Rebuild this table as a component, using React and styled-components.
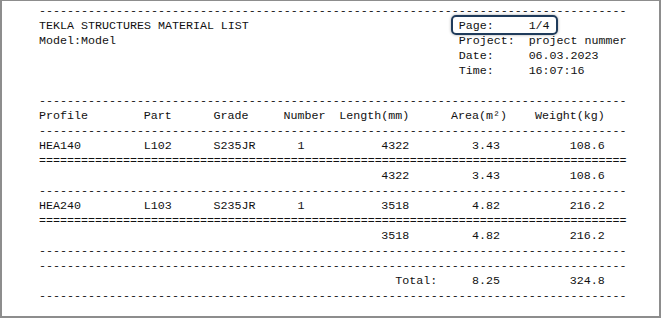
import React from "react";
import styled, { createGlobalStyle, css } from "styled-components";

const GlobalStyle = createGlobalStyle`
  html, body { margin: 0; padding: 0; background: #fff; }
`;

const WIDTH = 84;

const Frame = styled.div`
  box-sizing: border-box;
  width: 661px;
  height: 318px;
  border: 2px solid #8d8d8d;
  border-top-width: 1px;
  padding: 3px 0 0 37px;
  background: #fff;
  font-family: "Courier New", "Nimbus Mono PS", "FreeMono", "Liberation Mono", monospace;
  font-size: 11.67px;
  line-height: 15px;
  color: #111;
`;

const Sheet = styled.div`
  width: ${WIDTH}ch;
`;

const Rule = styled.div`
  height: 15px;
  white-space: pre;
  overflow: hidden;
`;

const Header = styled.div`
  display: flex;
  margin-bottom: 15px;
`;

const TitleBlock = styled.div`
  width: 60ch;
  white-space: pre;
`;

const MetaBlock = styled.div`
  display: flex;
  flex-direction: column;
  align-items: flex-start;
`;

const MetaRow = styled.div`
  display: flex;
  position: relative;
  white-space: pre;
  ${(p) =>
    p.$highlight &&
    css`
      &::before {
        content: "";
        position: absolute;
        inset: -4px -8px -1px -8px;
        border: 2px solid #1f3b5b;
        border-radius: 5px;
        box-shadow: 0 0 3px rgba(0, 0, 0, 0.35);
        pointer-events: none;
      }
    `}
`;

const MetaLabel = styled.span`
  width: 10ch;
`;

const GridLine = styled.div`
  display: grid;
  grid-template-columns: repeat(${WIDTH}, 1ch);
  height: 15px;
  white-space: pre;
`;

const Cell = styled.span`
  grid-column: ${(p) => p.$at + 1} / span ${(p) => p.$span};
  text-align: ${(p) => p.$align || "left"};
`;

const dashes = "-".repeat(WIDTH);
const equals = "=".repeat(WIDTH);

const headerCells = [
  ["Profile", 0, 15],
  ["Part", 15, 10],
  ["Grade", 25, 10],
  ["Number", 35, 8],
  ["Length(mm)", 43, 10],
  ["Area(m²)", 59, 8],
  ["Weight(kg)", 71, 10],
];

const itemCells = (it) => [
  [it.profile, 0, 15],
  [it.part, 15, 10],
  [it.grade, 25, 10],
  [it.number, 37, 6],
  [it.length, 43, 10, "right"],
  [it.area, 59, 7, "right"],
  [it.weight, 71, 10, "right"],
];

const sumCells = (it) => [
  [it.length, 43, 10, "right"],
  [it.area, 59, 7, "right"],
  [it.weight, 71, 10, "right"],
];

const items = [
  { profile: "HEA140", part: "L102", grade: "S235JR", number: "1", length: "4322", area: "3.43", weight: "108.6" },
  { profile: "HEA240", part: "L103", grade: "S235JR", number: "1", length: "3518", area: "4.82", weight: "216.2" },
];

const totalCells = [
  ["Total:", 51, 6],
  ["8.25", 59, 7, "right"],
  ["324.8", 71, 10, "right"],
];

const Line = ({ cells }) => (
  <GridLine>
    {cells.map(([text, at, span, align], i) => (
      <Cell key={i} $at={at} $span={span} $align={align}>
        {text}
      </Cell>
    ))}
  </GridLine>
);

const meta = [
  ["Page:", "1/4", true],
  ["Project:", "project nummer"],
  ["Date:", "06.03.2023"],
  ["Time:", "16:07:16"],
];

export default function App() {
  return (
    <>
      <GlobalStyle />
      <Frame>
        <Sheet>
          <Rule>{dashes}</Rule>
          <Header>
            <TitleBlock>
              <div>TEKLA STRUCTURES MATERIAL LIST</div>
              <div>Model:Model</div>
            </TitleBlock>
            <MetaBlock>
              {meta.map(([label, value, hl]) => (
                <MetaRow key={label} $highlight={hl}>
                  <MetaLabel>{label}</MetaLabel>
                  <span>{value}</span>
                </MetaRow>
              ))}
            </MetaBlock>
          </Header>
          <Rule>{dashes}</Rule>
          <Line cells={headerCells} />
          <Rule>{dashes}</Rule>
          {items.map((it, i) => (
            <React.Fragment key={it.part}>
              {i > 0 && <Rule>{dashes}</Rule>}
              <Line cells={itemCells(it)} />
              <Rule>{equals}</Rule>
              <Line cells={sumCells(it)} />
            </React.Fragment>
          ))}
          <Rule>{dashes}</Rule>
          <Rule>{dashes}</Rule>
          <Line cells={totalCells} />
          <Rule>{dashes}</Rule>
        </Sheet>
      </Frame>
    </>
  );
}
